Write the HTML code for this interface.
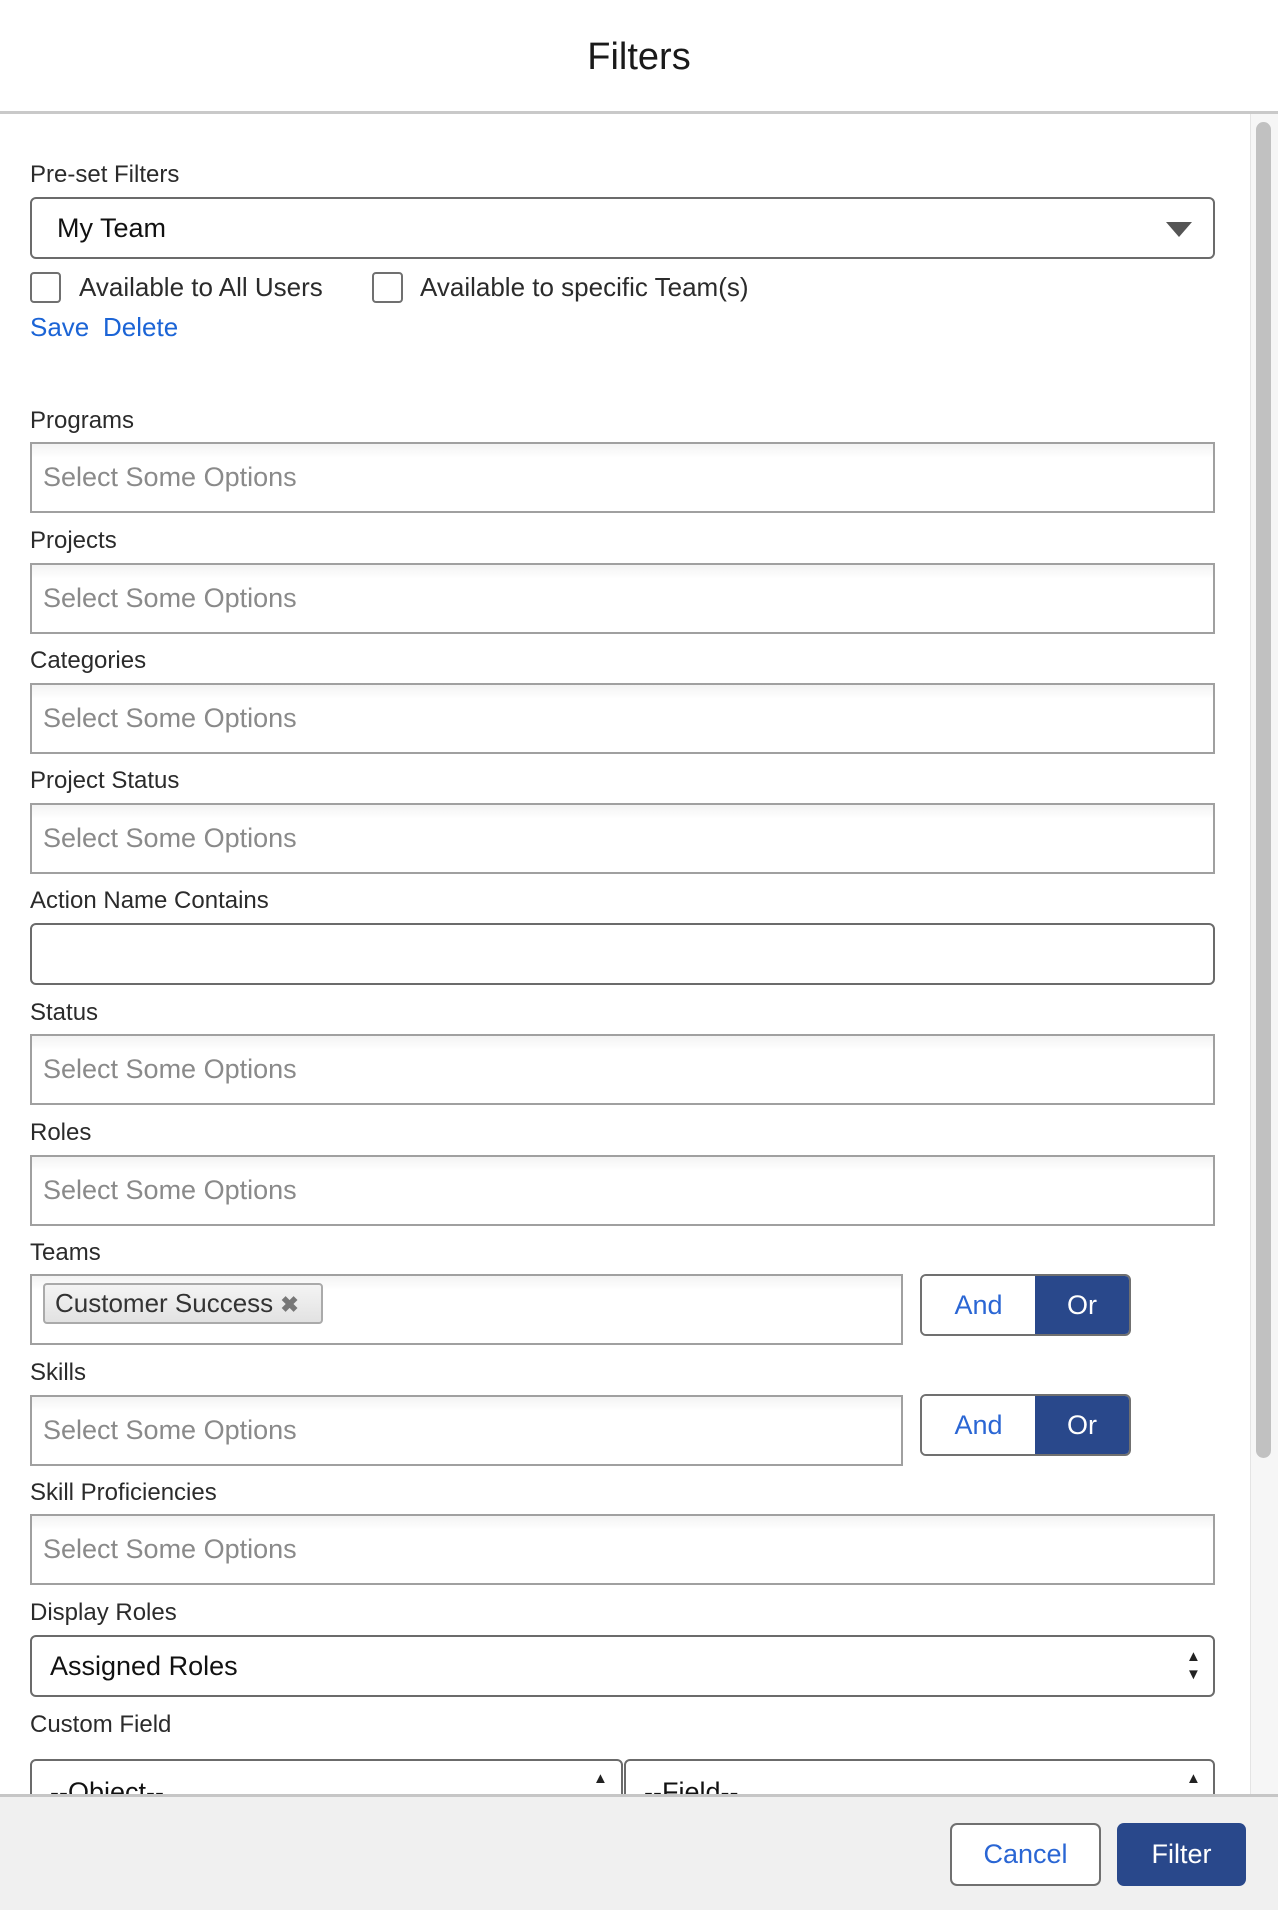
<!DOCTYPE html>
<html><head><meta charset="utf-8"><style>
*{box-sizing:border-box;margin:0;padding:0}
body{width:1278px;height:1910px;position:relative;overflow:hidden;background:#fff;font-family:"Liberation Sans",Arial,sans-serif;color:#222}
.a{position:absolute}
.hdr{left:0;top:0;width:1278px;height:114px;border-bottom:3px solid #c9c9c9;background:#fff}
.title{left:0;width:1278px;top:36px;text-align:center;font-size:38px;color:#1a1a1a}
.lbl{font-size:24px;color:#2b2b2b;left:30px}
.ms{left:30px;width:1185px;height:71px;border:2px solid #a0a0a0;background:linear-gradient(#f3f3f3,#fff 14px);font-size:27px;color:#8a8a8a;padding:0 0 0 11px;line-height:67px}
.inp{left:30px;width:1185px;border:2px solid #6b6b6b;border-radius:6px;background:#fff;font-size:27px;color:#111}
.cb{width:31px;height:31px;border:2px solid #707070;border-radius:4px;background:#fff}
.ao{width:211px;height:62px;border:2px solid #707070;border-radius:6px;overflow:hidden;display:flex;font-size:27px}
.ao span{display:flex;align-items:center;justify-content:center}
.ao .and{width:113px;color:#2a66d4;background:#fff}
.ao .or{flex:1;color:#fff;background:#29488b}
.link{color:#1b64d6;font-size:26px}
.sb{left:1250px;top:114px;width:28px;height:1680px;background:#f6f6f6;border-left:1px solid #e4e4e4}
.thumb{left:1256px;top:122px;width:15px;height:1336px;background:#c1c1c1;border-radius:8px}
.foot{left:0;top:1794px;width:1278px;height:116px;background:#f0f0f0;border-top:3px solid #c6c6c6}
.btn{top:1823px;height:63px;border-radius:7px;font-size:27px;display:flex;align-items:center;justify-content:center}
</style></head><body>
<div class="a hdr"></div>
<div class="a title">Filters</div>

<div class="a lbl" style="top:161px">Pre-set Filters</div>
<div class="a inp" style="top:197px;height:62px;padding-left:25px;line-height:58px">My Team</div>
<svg class="a" style="left:1166px;top:222px" width="26" height="15"><path d="M0 0H26L13 15Z" fill="#555"/></svg>
<div class="a cb" style="left:30px;top:272px"></div>
<div class="a" style="left:79px;top:272px;font-size:26px;color:#2b2b2b">Available to All Users</div>
<div class="a cb" style="left:372px;top:272px"></div>
<div class="a" style="left:420px;top:272px;font-size:26px;color:#2b2b2b">Available to specific Team(s)</div>
<div class="a link" style="left:30px;top:312px">Save</div>
<div class="a link" style="left:103px;top:312px">Delete</div>

<div class="a lbl" style="top:407px">Programs</div>
<div class="a ms" style="top:442px">Select Some Options</div>
<div class="a lbl" style="top:527px">Projects</div>
<div class="a ms" style="top:563px">Select Some Options</div>
<div class="a lbl" style="top:647px">Categories</div>
<div class="a ms" style="top:683px">Select Some Options</div>
<div class="a lbl" style="top:767px">Project Status</div>
<div class="a ms" style="top:803px">Select Some Options</div>
<div class="a lbl" style="top:887px">Action Name Contains</div>
<div class="a inp" style="top:923px;height:62px"></div>
<div class="a lbl" style="top:999px">Status</div>
<div class="a ms" style="top:1034px">Select Some Options</div>
<div class="a lbl" style="top:1119px">Roles</div>
<div class="a ms" style="top:1155px">Select Some Options</div>
<div class="a lbl" style="top:1239px">Teams</div>
<div class="a ms" style="top:1274px;width:873px"></div>
<div class="a" style="left:43px;top:1283px;width:280px;height:41px;border:2px solid #aaa;border-radius:4px;background:linear-gradient(#f4f4f4,#e2e2e2);font-size:26px;color:#333;padding-left:10px;line-height:37px;white-space:nowrap">Customer Success <span style="color:#777;font-weight:bold;font-size:22px">✖</span></div>
<div class="a ao" style="left:920px;top:1274px"><span class="and">And</span><span class="or">Or</span></div>
<div class="a lbl" style="top:1359px">Skills</div>
<div class="a ms" style="top:1395px;width:873px">Select Some Options</div>
<div class="a ao" style="left:920px;top:1394px"><span class="and">And</span><span class="or">Or</span></div>
<div class="a lbl" style="top:1479px">Skill Proficiencies</div>
<div class="a ms" style="top:1514px">Select Some Options</div>
<div class="a lbl" style="top:1599px">Display Roles</div>
<div class="a inp" style="top:1635px;height:62px;padding-left:18px;line-height:58px">Assigned Roles</div>
<div class="a" style="left:1186px;top:1648px;font-size:15px;line-height:18px;color:#222">▲<br>▼</div>
<div class="a lbl" style="top:1711px">Custom Field</div>
<div class="a inp" style="top:1759px;width:593px;height:62px;padding-left:18px;line-height:58px;padding-top:2px">--Object--</div>
<div class="a inp" style="left:624px;top:1759px;width:591px;height:62px;padding-left:18px;line-height:58px;padding-top:2px">--Field--</div>
<div class="a" style="left:593px;top:1770px;font-size:15px">▲</div>
<div class="a" style="left:1186px;top:1770px;font-size:15px">▲</div>

<div class="a sb"></div>
<div class="a thumb"></div>
<div class="a foot"></div>
<div class="a btn" style="left:950px;width:151px;border:2px solid #707070;background:#fff;color:#2a66d4">Cancel</div>
<div class="a btn" style="left:1117px;width:129px;background:#29488b;color:#fff">Filter</div>
</body></html>
